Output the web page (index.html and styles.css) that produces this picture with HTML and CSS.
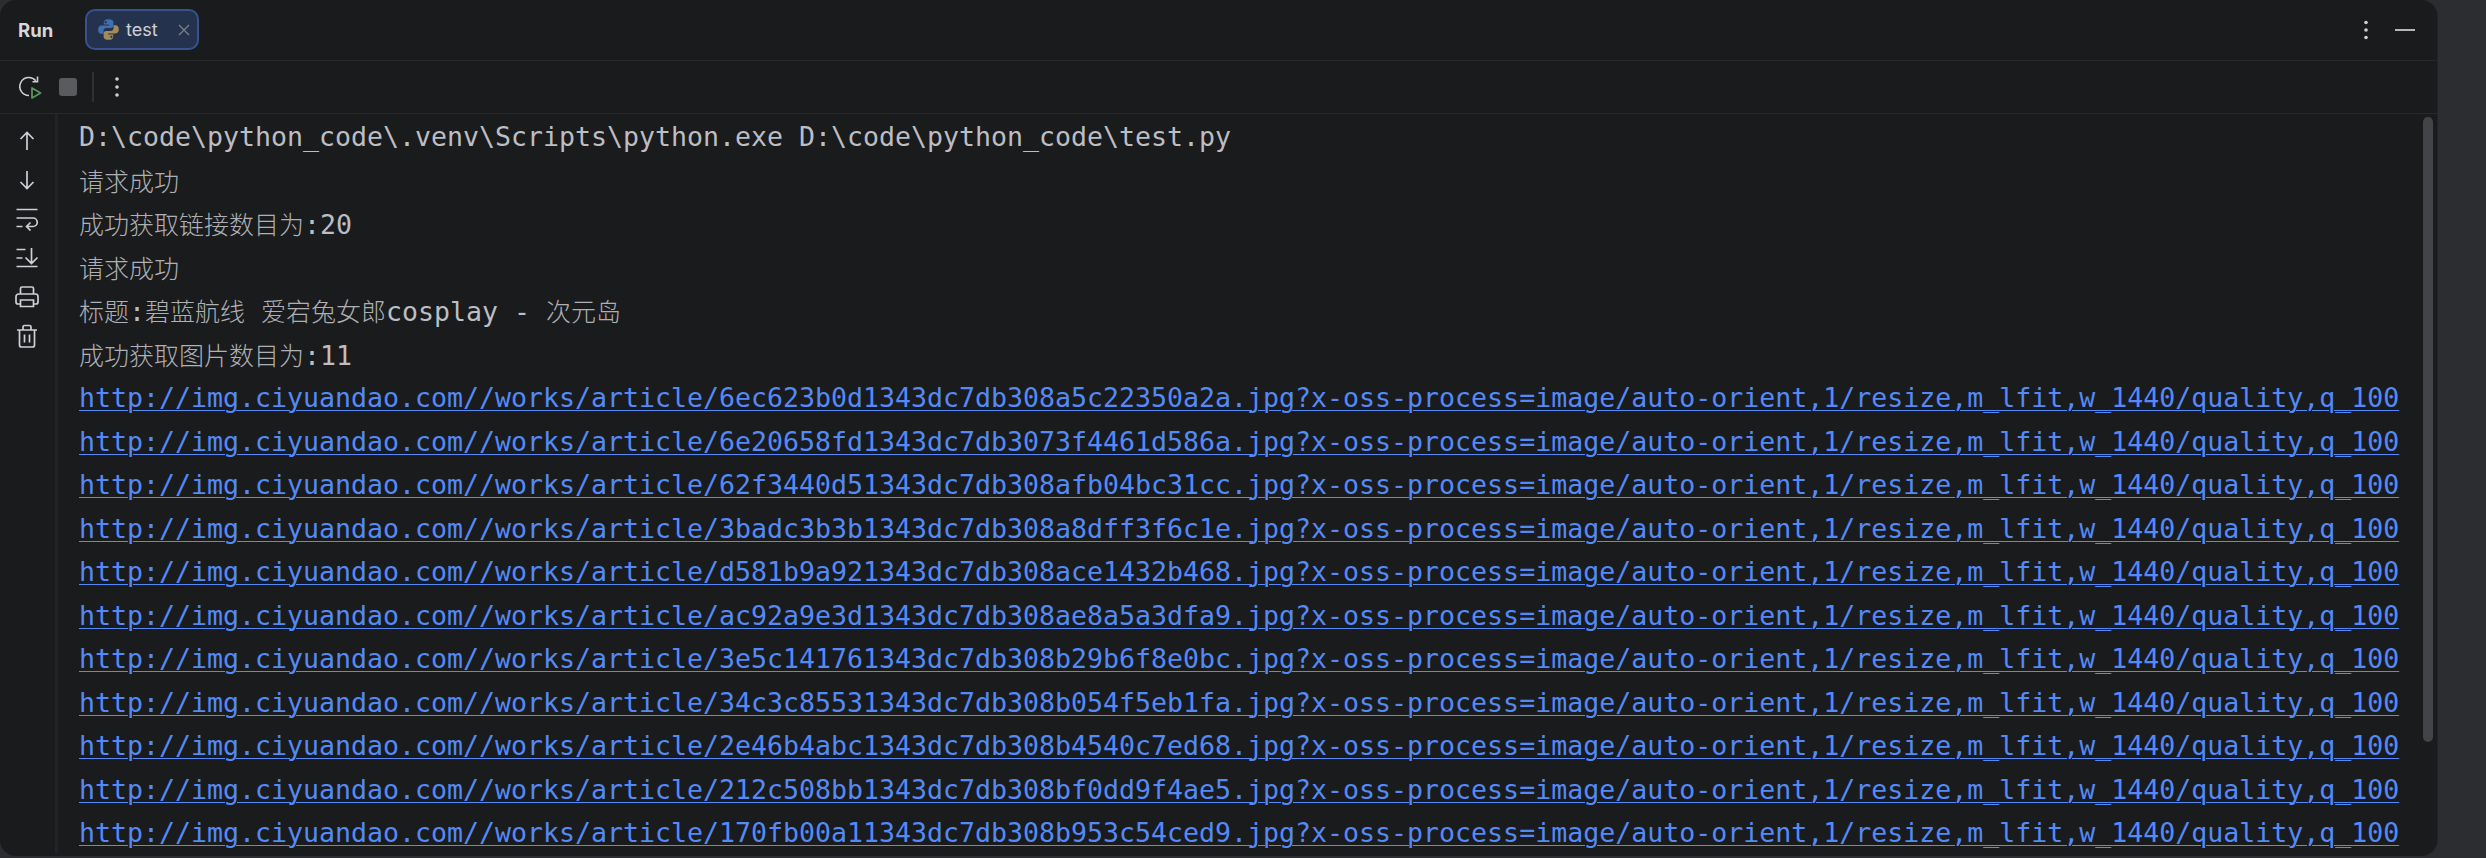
FILE: index.html
```html
<!DOCTYPE html>
<html lang="zh">
<head>
<meta charset="utf-8">
<title>Run - test</title>
<link rel="stylesheet" href="styles.css">
</head>
<body>
<main class="panel">
  <header class="head">
    <span class="run-title">Run</span>
    <div class="tab">
      <svg class="py" viewBox="0 0 16 16" width="23" height="23">
        <path id="snake" fill="#3f6fb0" d="M8 .8C5.6.8 4.7 1.7 4.7 3v1.6h3.6v.7H3.2C1.8 5.300.8 6.300.8 8.100c0 1.800 1 2.900 2.300 2.900h1.400V9.100c0-1.200.9-2.100 2.100-2.100h3.100c1 0 1.700-.7 1.700-1.700V3C11.400 1.600 10.300.8 8 .8zM6 2.100a.8.8 0 1 1 0 1.600.8.8 0 0 1 0-1.600z"/>
        <path fill="#a48a56" d="M8 15.200c2.400 0 3.300-.9 3.300-2.200v-1.600H7.700v-.7h5.100c1.400 0 2.400-1 2.400-2.800 0-1.800-1-2.900-2.300-2.900h-1.400v1.900c0 1.200-.9 2.100-2.100 2.100H6.300c-1 0-1.700.7-1.700 1.700V13c0 1.400 1.100 2.200 3.400 2.200zm2-1.300a.8.8 0 1 1 0-1.600.8.8 0 0 1 0 1.600z"/>
      </svg>
      <span class="tab-name">test</span>
      <svg class="tab-x" viewBox="0 0 12 12" width="12" height="12"><path d="M1 1l10 10M11 1L1 11" stroke="#7a7e85" stroke-width="1.400" fill="none"/></svg>
    </div>
    <svg class="more head-more" viewBox="0 0 24 24" width="24" height="24"><circle cx="12" cy="4.500" r="1.800"/><circle cx="12" cy="12" r="1.800"/><circle cx="12" cy="19.500" r="1.800"/></svg>
    <span class="minimize"></span>
  </header>
  <div class="toolbar">
    <svg class="rerun" viewBox="0 0 24 24" width="24" height="24" fill="none">
      <path d="M16.800 5.800A9 9 0 1 0 10 20.500" stroke="#ced0d6" stroke-width="1.600"/>
      <path d="M18.500 1.500V6.800H13.500" stroke="#ced0d6" stroke-width="1.600"/>
      <path d="M13 13l8.500 5L13 23z" stroke="#57965c" stroke-width="1.800" stroke-linejoin="round"/>
    </svg>
    <span class="stop"></span>
    <span class="tool-sep"></span>
    <svg class="more tool-more" viewBox="0 0 24 24" width="24" height="24"><circle cx="12" cy="4" r="1.800"/><circle cx="12" cy="12" r="1.800"/><circle cx="12" cy="20" r="1.800"/></svg>
  </div>
  <div class="body">
    <aside class="gutter">
      <svg viewBox="0 0 24 24" width="24" height="24" fill="none" stroke="#ced0d6" stroke-width="1.700"><path d="M12 21V3.500M5.500 10L12 3.500 18.500 10"/></svg>
      <svg viewBox="0 0 24 24" width="24" height="24" fill="none" stroke="#ced0d6" stroke-width="1.700"><path d="M12 3v17.500M5.500 14L12 20.500 18.500 14"/></svg>
      <svg viewBox="0 0 24 24" width="24" height="24" fill="none" stroke="#ced0d6" stroke-width="1.700"><path d="M1.500 2.500h21M1.500 11h16.500a4 4 0 0 1 0 8.500h-6M15.500 15.500l-4 4 4 4M1.500 19.500h6"/></svg>
      <svg viewBox="0 0 24 24" width="24" height="24" fill="none" stroke="#ced0d6" stroke-width="1.700"><path d="M1.500 3.500h9M1.500 12h6M1.500 20.500h21M16.500 2v15.500M10.500 11.500l6 6 6-6"/></svg>
      <svg viewBox="0 0 24 24" width="24" height="24" fill="none" stroke="#ced0d6" stroke-width="1.700"><path d="M5.500 9V3.500a1.500 1.500 0 0 1 1.500-1.500h10a1.500 1.500 0 0 1 1.500 1.500V9M5.500 19H3a2 2 0 0 1-2-2v-5.500a2.500 2.500 0 0 1 2.500-2.500h17a2.500 2.500 0 0 1 2.500 2.500V17a2 2 0 0 1-2 2h-2.500M5.500 15h13v6.500h-13z"/></svg>
      <svg viewBox="0 0 24 24" width="24" height="24" fill="none" stroke="#ced0d6" stroke-width="1.700"><path d="M2 6h20M8 6V3a1.500 1.500 0 0 1 1.500-1.500h5A1.500 1.500 0 0 1 16 3v3M4.500 6v15a2 2 0 0 0 2 2h11a2 2 0 0 0 2-2V6M9.500 10.500v8M14.500 10.500v8"/></svg>
    </aside>
    <section class="output">
      <div class="line">D:\code\python_code\.venv\Scripts\python.exe D:\code\python_code\test.py</div>
      <div class="line"><span class="cjk">请求成功</span></div>
      <div class="line"><span class="cjk">成功获取链接数目为</span>:20</div>
      <div class="line"><span class="cjk">请求成功</span></div>
      <div class="line"><span class="cjk">标题</span>:<span class="cjk">碧蓝航线</span> <span class="cjk">爱宕兔女郎</span>cosplay - <span class="cjk">次元岛</span></div>
      <div class="line"><span class="cjk">成功获取图片数目为</span>:11</div>
      <div class="line"><a class="link">http://img.ciyuandao.com//works/article/6ec623b0d1343dc7db308a5c22350a2a.jpg?x-oss-process=image/auto-orient,1/resize,m_lfit,w_1440/quality,q_100</a></div>
      <div class="line"><a class="link">http://img.ciyuandao.com//works/article/6e20658fd1343dc7db3073f4461d586a.jpg?x-oss-process=image/auto-orient,1/resize,m_lfit,w_1440/quality,q_100</a></div>
      <div class="line"><a class="link">http://img.ciyuandao.com//works/article/62f3440d51343dc7db308afb04bc31cc.jpg?x-oss-process=image/auto-orient,1/resize,m_lfit,w_1440/quality,q_100</a></div>
      <div class="line"><a class="link">http://img.ciyuandao.com//works/article/3badc3b3b1343dc7db308a8dff3f6c1e.jpg?x-oss-process=image/auto-orient,1/resize,m_lfit,w_1440/quality,q_100</a></div>
      <div class="line"><a class="link">http://img.ciyuandao.com//works/article/d581b9a921343dc7db308ace1432b468.jpg?x-oss-process=image/auto-orient,1/resize,m_lfit,w_1440/quality,q_100</a></div>
      <div class="line"><a class="link">http://img.ciyuandao.com//works/article/ac92a9e3d1343dc7db308ae8a5a3dfa9.jpg?x-oss-process=image/auto-orient,1/resize,m_lfit,w_1440/quality,q_100</a></div>
      <div class="line"><a class="link">http://img.ciyuandao.com//works/article/3e5c141761343dc7db308b29b6f8e0bc.jpg?x-oss-process=image/auto-orient,1/resize,m_lfit,w_1440/quality,q_100</a></div>
      <div class="line"><a class="link">http://img.ciyuandao.com//works/article/34c3c85531343dc7db308b054f5eb1fa.jpg?x-oss-process=image/auto-orient,1/resize,m_lfit,w_1440/quality,q_100</a></div>
      <div class="line"><a class="link">http://img.ciyuandao.com//works/article/2e46b4abc1343dc7db308b4540c7ed68.jpg?x-oss-process=image/auto-orient,1/resize,m_lfit,w_1440/quality,q_100</a></div>
      <div class="line"><a class="link">http://img.ciyuandao.com//works/article/212c508bb1343dc7db308bf0dd9f4ae5.jpg?x-oss-process=image/auto-orient,1/resize,m_lfit,w_1440/quality,q_100</a></div>
      <div class="line"><a class="link">http://img.ciyuandao.com//works/article/170fb00a11343dc7db308b953c54ced9.jpg?x-oss-process=image/auto-orient,1/resize,m_lfit,w_1440/quality,q_100</a></div>
      <div class="scrollbar"></div>
    </section>
  </div>
</main>
</body>
</html>
```
FILE: styles.css
```css
* { box-sizing: border-box; }
html, body { height: 100%; }
body {
  margin: 0;
  background: #2b2d30;
  overflow: hidden;
}
.panel {
  width: 2437px;
  height: 856px;
  background: #1a1b1d;
  border-radius: 16px;
  display: flex;
  flex-direction: column;
  overflow: hidden;
  box-shadow: 1px 0 0 #232427;
}
.head {
  height: 61px;
  flex: none;
  display: flex;
  align-items: center;
  padding: 0 22px 1px 18px;
  border-bottom: 1px solid #27282b;
}
.run-title {
  font: 700 18.500px "Inter", "Liberation Sans", sans-serif;
  color: #d5d7dc;
  width: 36px;
}
.tab {
  margin-left: 31px;
  width: 114px;
  height: 41px;
  display: flex;
  align-items: center;
  padding-left: 10px;
  background: #25324d;
  border: 2px solid #35538f;
  border-radius: 10px;
}
.tab-name {
  margin-left: 6px;
  font: 400 18px "Inter", "Liberation Sans", sans-serif;
  color: #ced0d6;
}
.tab-x { margin-left: 20px; }
.more circle { fill: #ced0d6; }
.head-more { margin-left: auto; }
.minimize {
  margin-left: 17px;
  width: 20px;
  height: 2px;
  background: #b4b6bb;
}
.toolbar {
  height: 53px;
  flex: none;
  display: flex;
  align-items: center;
  padding-left: 19px;
  border-bottom: 1px solid #27282b;
}
.stop {
  margin-left: 16px;
  width: 18px;
  height: 18px;
  border-radius: 3px;
  background: #5a5b5e;
}
.tool-sep {
  margin-left: 15px;
  width: 2px;
  height: 30px;
  background: #2e3033;
}
.tool-more { margin-left: 11px; }
.body {
  flex: 1;
  min-height: 0;
  display: flex;
}
.gutter {
  width: 58px;
  flex: none;
  display: flex;
  flex-direction: column;
  align-items: center;
  gap: 15px;
  padding: 15px 2px 0 0;
  border-right: 3px solid #222326;
  margin-bottom: 3px;
}
.output {
  flex: 1;
  position: relative;
  padding: 1px 0 0 21px;
  overflow: hidden;
  font-family: "DejaVu Sans Mono", "Noto Sans CJK SC", monospace;
  font-size: 26.580px;
  color: #bcbec4;
}
.line {
  height: 43.500px;
  line-height: 43.500px;
  white-space: pre;
}
.cjk {
  font-family: "Noto Sans CJK SC", sans-serif;
  font-size: 25px;
  font-weight: 300;
  color: #aeb0b6;
}
.link {
  color: #548af7;
  text-decoration: underline;
  text-decoration-thickness: 1px;
  text-underline-offset: 3px;
}
.scrollbar {
  position: absolute;
  top: 3px;
  right: 4px;
  width: 10px;
  height: 625px;
  border-radius: 5px;
  background: #434447;
}
```
